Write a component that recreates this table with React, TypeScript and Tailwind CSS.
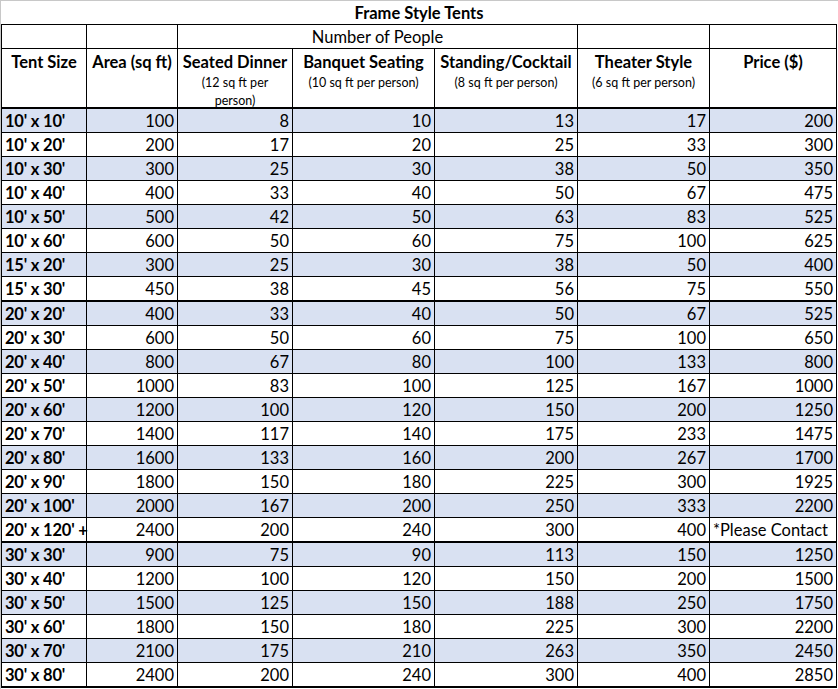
const grid =
  "grid grid-cols-[85px_91px_115px_142px_143px_132px_127px]";

type Row = [string, number, number, number, number, number, number | string];

const rows: Row[] = [
  ["10' x 10'", 100, 8, 10, 13, 17, 200],
  ["10' x 20'", 200, 17, 20, 25, 33, 300],
  ["10' x 30'", 300, 25, 30, 38, 50, 350],
  ["10' x 40'", 400, 33, 40, 50, 67, 475],
  ["10' x 50'", 500, 42, 50, 63, 83, 525],
  ["10' x 60'", 600, 50, 60, 75, 100, 625],
  ["15' x 20'", 300, 25, 30, 38, 50, 400],
  ["15' x 30'", 450, 38, 45, 56, 75, 550],
  ["20' x 20'", 400, 33, 40, 50, 67, 525],
  ["20' x 30'", 600, 50, 60, 75, 100, 650],
  ["20' x 40'", 800, 67, 80, 100, 133, 800],
  ["20' x 50'", 1000, 83, 100, 125, 167, 1000],
  ["20' x 60'", 1200, 100, 120, 150, 200, 1250],
  ["20' x 70'", 1400, 117, 140, 175, 233, 1475],
  ["20' x 80'", 1600, 133, 160, 200, 267, 1700],
  ["20' x 90'", 1800, 150, 180, 225, 300, 1925],
  ["20' x 100'", 2000, 167, 200, 250, 333, 2200],
  ["20' x 120' +", 2400, 200, 240, 300, 400, "*Please Contact"],
  ["30' x 30'", 900, 75, 90, 113, 150, 1250],
  ["30' x 40'", 1200, 100, 120, 150, 200, 1500],
  ["30' x 50'", 1500, 125, 150, 188, 250, 1750],
  ["30' x 60'", 1800, 150, 180, 225, 300, 2200],
  ["30' x 70'", 2100, 175, 210, 263, 350, 2450],
  ["30' x 80'", 2400, 200, 240, 300, 400, 2850],
];

// last row of each size group gets the heavy rule
const groupEnds = [7, 17, 23];

const HeaderCell = ({ title, note }: { title: string; note?: React.ReactNode }) => (
  <div className="border-r border-black overflow-hidden flex flex-col items-center pt-[3px]">
    <p className="font-bold text-[16.5px] leading-[20px] whitespace-nowrap">{title}</p>
    {note && <p className="text-[12.5px] leading-[18px] text-center mt-[2px]">{note}</p>}
  </div>
);

const DataRow = ({ row, index }: { row: Row; index: number }) => {
  const end = groupEnds.includes(index);
  const shaded = index % 2 === 0;
  return (
    <div
      className={`${grid} ${end ? "h-[25px] border-b-2" : "h-[24px] border-b"} border-black ${
        shaded ? "bg-[#d9e1f2]" : "bg-white"
      }`}
    >
      <div className="border-r border-black flex items-center pl-[3px] font-bold whitespace-nowrap tracking-[-0.2px]">
        {row[0]}
      </div>
      {row.slice(1).map((v, i) =>
        typeof v === "string" ? (
          <div key={i} className="border-r border-black flex items-center pl-[3px] whitespace-nowrap">
            {v}
          </div>
        ) : (
          <div key={i} className="border-r border-black flex items-center justify-end pr-[3px]">
            {v}
          </div>
        )
      )}
    </div>
  );
};

export default function App() {
  return (
    <div className="w-[838px] h-[689px] bg-white border-t border-l border-[#c8c8c8] font-['Lato',sans-serif] text-[16.5px] text-black overflow-hidden">
      <div className="w-[836px] h-[24px] border-b border-black flex items-center justify-center font-bold pt-[1px]">
        Frame Style Tents
      </div>
      <div className="w-[836px] border-l border-black">
        <div className={`${grid} h-[24px] border-b border-black`}>
          <div className="border-r border-black" />
          <div className="border-r border-black" />
          <div className="col-span-3 border-r border-black flex items-center justify-center">
            Number of People
          </div>
          <div className="border-r border-black" />
          <div className="border-r border-black" />
        </div>
        <div className={`${grid} h-[60px] border-b-2 border-black`}>
          <HeaderCell title="Tent Size" />
          <HeaderCell title="Area (sq ft)" />
          <HeaderCell
            title="Seated Dinner"
            note={
              <>
                (12 sq ft per
                <br />
                person)
              </>
            }
          />
          <HeaderCell title="Banquet Seating" note="(10 sq ft per person)" />
          <HeaderCell title="Standing/Cocktail" note="(8 sq ft per person)" />
          <HeaderCell title="Theater Style" note="(6 sq ft per person)" />
          <HeaderCell title="Price ($)" />
        </div>
        {rows.map((r, i) => (
          <DataRow key={r[0]} row={r} index={i} />
        ))}
      </div>
    </div>
  );
}
